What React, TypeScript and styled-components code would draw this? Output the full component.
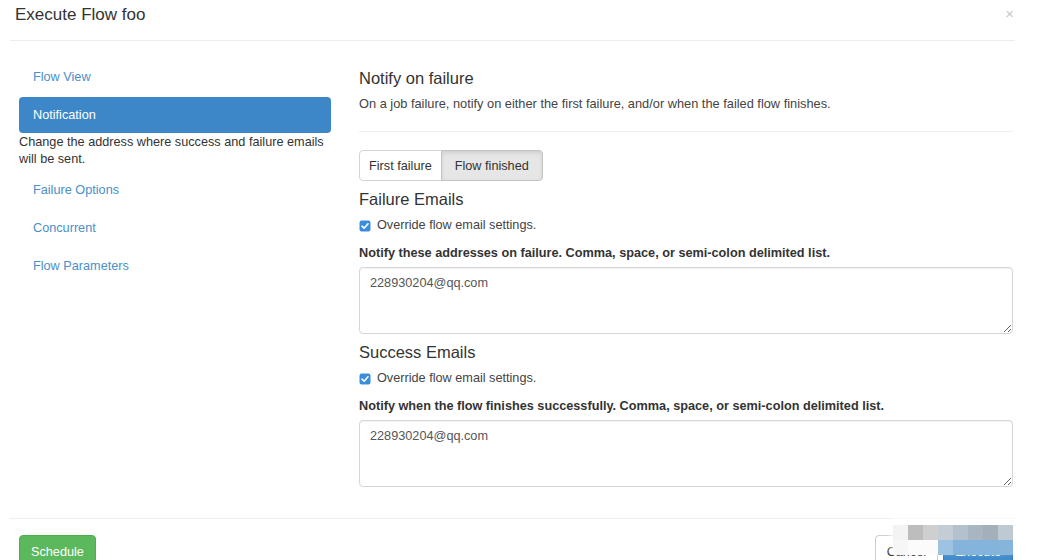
import React from "react";
import styled, { createGlobalStyle } from "styled-components";

const Global = createGlobalStyle`
  html, body { margin: 0; padding: 0; background: #fff; }
  body {
    font-family: "Liberation Sans", Arial, Helvetica, sans-serif;
    color: #333;
    height: 560px;
    overflow: hidden;
  }
  * { box-sizing: border-box; }
`;

const Modal = styled.div`
  position: relative;
  margin-left: 10px;
  width: 1005px;
`;

const Header = styled.div`
  height: 41px;
  padding: 5px 1px 0 5px;
  border-bottom: 1px solid #ececec;
  display: flex;
  justify-content: space-between;
  align-items: flex-start;
`;

const Title = styled.h4`
  margin: 0;
  font-size: 17px;
  line-height: 20px;
  font-weight: normal;
  color: #333;
`;

const Close = styled.span`
  font-size: 15px;
  line-height: 18px;
  color: #c8c8c8;
`;

const Body = styled.div`
  display: flex;
  gap: 28px;
  padding: 18px 0 0 9px;
`;

const Nav = styled.div`
  width: 312px;
  display: flex;
  flex-direction: column;
`;

const NavItem = styled.div<{ $active?: boolean }>`
  height: 36px;
  line-height: 37px;
  padding-left: 14px;
  border-radius: 4px;
  font-size: 12.7px;
  color: ${(p) => (p.$active ? "#fff" : "#4a8fc9")};
  background: ${(p) => (p.$active ? "#3d87c8" : "transparent")};
  margin-bottom: ${(p) => (p.$active ? "0" : "2px")};
`;

const NavDesc = styled.div`
  font-size: 12.7px;
  line-height: 17px;
  color: #333;
  padding-top: 1px;
  margin-bottom: 4px;
`;

const Main = styled.div`
  width: 654px;
  display: flex;
  flex-direction: column;
`;

const Heading = styled.h4<{ $mt: number }>`
  margin: ${(p) => p.$mt}px 0 0;
  font-size: 16.5px;
  line-height: 20px;
  font-weight: normal;
  color: #333;
`;

const Help = styled.p`
  margin: 7px 0 0;
  font-size: 12.8px;
  line-height: 17px;
  color: #444;
`;

const Rule = styled.hr`
  margin: 19px 0 0;
  border: 0;
  border-top: 1px solid #eeeeee;
  width: 100%;
`;

const BtnGroup = styled.div`
  display: flex;
  margin-top: 18px;
`;

const ToggleBtn = styled.button<{ $active?: boolean; $first?: boolean }>`
  height: 31px;
  padding: ${(p) => (p.$first ? "0 9px" : "0 13px")};
  font-family: inherit;
  font-size: 12.7px;
  color: #333;
  background: ${(p) => (p.$active ? "#e6e6e6" : "#fff")};
  border: 1px solid ${(p) => (p.$active ? "#c4c4c4" : "#d4d4d4")};
  box-shadow: ${(p) => (p.$active ? "inset 0 2px 4px rgba(0,0,0,0.10)" : "none")};
  border-radius: ${(p) => (p.$first ? "4px 0 0 4px" : "0 4px 4px 0")};
  margin-left: ${(p) => (p.$first ? "0" : "-1px")};
`;

const CheckRow = styled.label`
  display: flex;
  align-items: center;
  gap: 6px;
  margin-top: 8px;
  font-size: 12.7px;
  line-height: 17px;
  color: #444;
`;

const FieldLabel = styled.div<{ $mt: number }>`
  margin-top: ${(p) => p.$mt}px;
  font-size: 12.7px;
  line-height: 17px;
  font-weight: bold;
  color: #333;
`;

const TextArea = styled.textarea<{ $h: number }>`
  margin-top: 5px;
  width: 654px;
  height: ${(p) => p.$h}px;
  padding: 7px 10px;
  font-family: "Liberation Sans", Arial, sans-serif;
  font-size: 12.7px;
  line-height: 17px;
  color: #555;
  border: 1px solid #d6d6d6;
  border-radius: 4px;
  box-shadow: inset 0 1px 1px rgba(0,0,0,0.05);
  background: #fff;
  outline: none;
  resize: vertical;
  display: block;
`;

const Footer = styled.div`
  margin-top: 31px;
  border-top: 1px solid #eeeeee;
  padding: 16px 2px 0 9px;
  display: flex;
  justify-content: space-between;
  align-items: flex-start;
`;

const Btn = styled.button<{ $kind: "success" | "default" | "primary" }>`
  height: 34px;
  padding: 0 11px;
  font-family: inherit;
  font-size: 12.7px;
  border-radius: 4px;
  border: 1px solid
    ${(p) => (p.$kind === "success" ? "#4cae4c" : p.$kind === "primary" ? "#357ebd" : "#ccc")};
  background: ${(p) => (p.$kind === "success" ? "#5cb85c" : p.$kind === "primary" ? "#428bca" : "#fff")};
  color: ${(p) => (p.$kind === "default" ? "#333" : "#fff")};
`;

const RightBtns = styled.div`
  display: flex;
  gap: 5px;
`;

const Mosaic = styled.div`
  position: absolute;
  left: 883px;
  top: 525px;
  width: 122px;
  display: grid;
  grid-template-columns: repeat(8, 15px);
  grid-auto-rows: 15px;
  background: #fff;
  border-radius: 0 0 8px 2px;
  box-shadow: 0 -6px 6px 2px #fff;
`;

const Tile = styled.div<{ $c: string }>`
  background: ${(p) => p.$c};
`;

const Check = () => (
  <svg width="12" height="12" viewBox="0 0 12 12">
    <rect x="0.5" y="0.5" width="11" height="11" rx="2.2" fill="#3a8ddd" />
    <path d="M3 6.2 L5.1 8.2 L9 3.8" fill="none" stroke="#fff" strokeWidth="1.6" strokeLinecap="round" strokeLinejoin="round" />
  </svg>
);

const tiles = [
  "#f3f3f3", "#bdbdbd", "#cfcfcf", "#c4ccd6", "#b3c0ce", "#a9b6c1", "#a3afb9", "#bfc9d2",
  "#f6f6f6", "#fbfbfb", "#fbfbfb", "#9ec3e2", "#84b4dc", "#84b4dc", "#84b4dc", "#86b5dc",
];

export default function App() {
  return (
    <>
      <Global />
      <Modal>
        <Header>
          <Title>Execute Flow foo</Title>
          <Close>×</Close>
        </Header>
        <Body>
          <Nav>
            <NavItem>Flow View</NavItem>
            <NavItem $active>Notification</NavItem>
            <NavDesc>Change the address where success and failure emails will be sent.</NavDesc>
            <NavItem>Failure Options</NavItem>
            <NavItem>Concurrent</NavItem>
            <NavItem>Flow Parameters</NavItem>
          </Nav>
          <Main>
            <Heading $mt={9}>Notify on failure</Heading>
            <Help>On a job failure, notify on either the first failure, and/or when the failed flow finishes.</Help>
            <Rule />
            <BtnGroup>
              <ToggleBtn $first>First failure</ToggleBtn>
              <ToggleBtn $active>Flow finished</ToggleBtn>
            </BtnGroup>
            <Heading $mt={8}>Failure Emails</Heading>
            <CheckRow>
              <Check />
              Override flow email settings.
            </CheckRow>
            <FieldLabel $mt={11}>Notify these addresses on failure. Comma, space, or semi-colon delimited list.</FieldLabel>
            <TextArea $h={67} readOnly defaultValue="228930204@qq.com" />
            <Heading $mt={8}>Success Emails</Heading>
            <CheckRow>
              <Check />
              Override flow email settings.
            </CheckRow>
            <FieldLabel $mt={11}>Notify when the flow finishes successfully. Comma, space, or semi-colon delimited list.</FieldLabel>
            <TextArea $h={67} readOnly defaultValue="228930204@qq.com" />
          </Main>
        </Body>
        <Footer>
          <Btn $kind="success">Schedule</Btn>
          <RightBtns>
            <Btn $kind="default">Cancel</Btn>
            <Btn $kind="primary">Execute</Btn>
          </RightBtns>
        </Footer>
        <Mosaic>
          {tiles.map((c, i) => (
            <Tile key={i} $c={c} />
          ))}
        </Mosaic>
      </Modal>
    </>
  );
}
